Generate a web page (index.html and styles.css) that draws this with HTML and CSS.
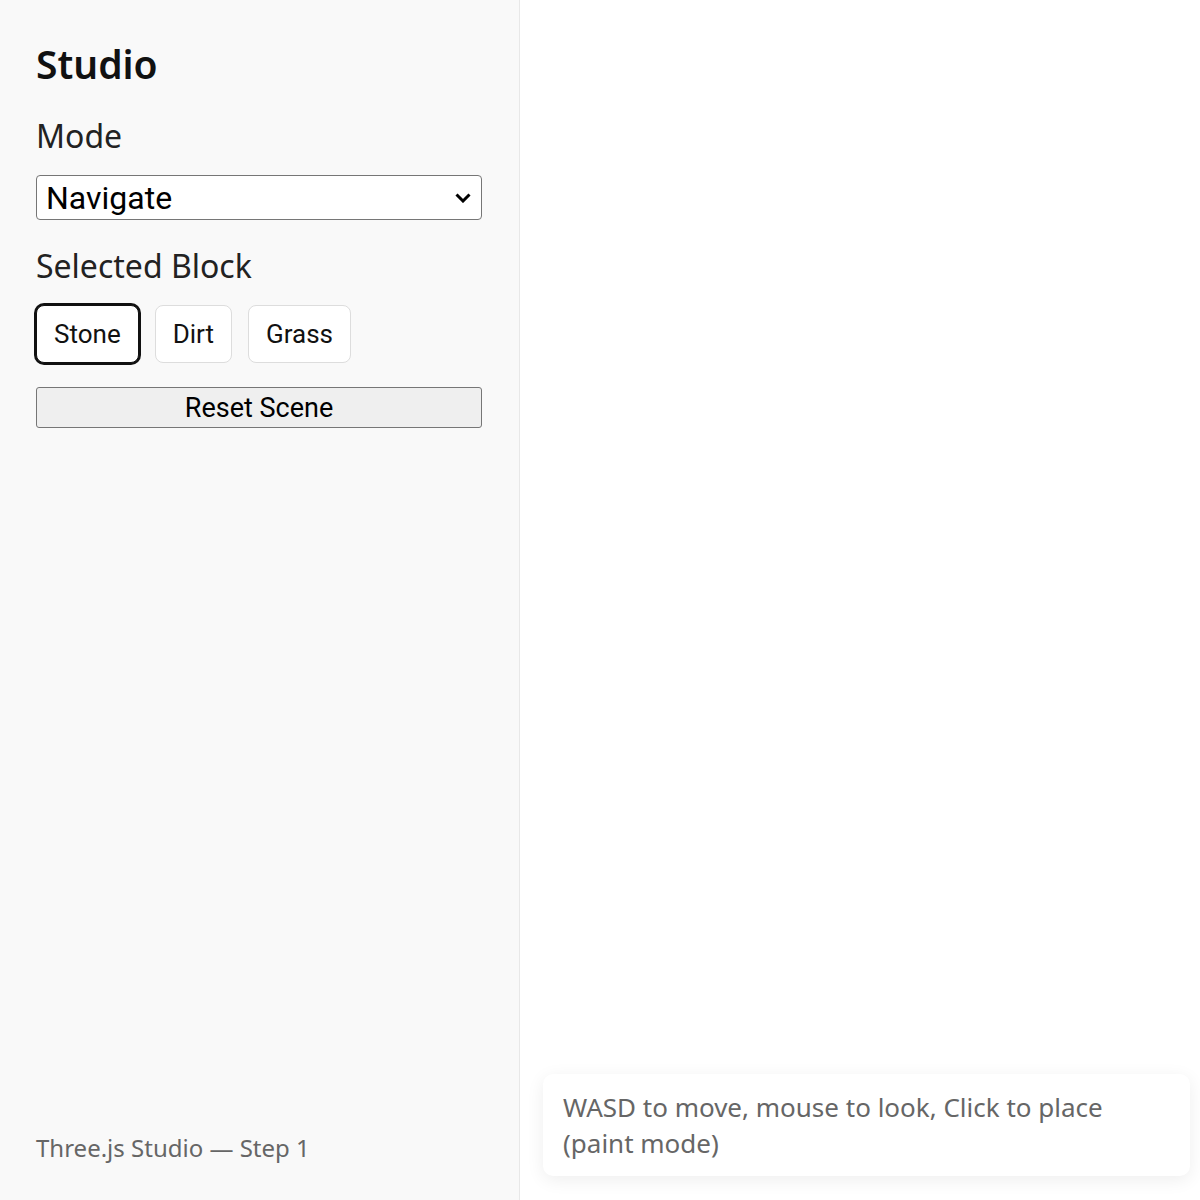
FILE: index.html
```html
<!DOCTYPE html>
<html lang="en">
<head>
    <meta charset="UTF-8">
    <meta name="viewport" content="width=device-width, initial-scale=1.0">
    <title>Three.js Studio</title>
    <link rel="stylesheet" href="styles.css">
</head>
<body>
    <aside class="sidebar">
        <h1>Studio</h1>

        <label class="field-label" for="mode">Mode</label>
        <select id="mode" class="mode-select">
            <option>Navigate</option>
            <option>Paint</option>
        </select>

        <div class="field-label block-label">Selected Block</div>
        <div class="block-list">
            <button class="block-btn selected">Stone</button>
            <button class="block-btn">Dirt</button>
            <button class="block-btn">Grass</button>
        </div>

        <button class="reset-btn">Reset Scene</button>

        <div class="footer">Three.js Studio — Step 1</div>
    </aside>

    <main class="viewport">
        <div class="hint">WASD to move, mouse to look, Click to place (paint mode)</div>
    </main>
</body>
</html>
```

FILE: styles.css
```css
html, body {
    margin: 0;
    height: 100%;
}
body {
    display: flex;
    font-family: "Noto Sans", sans-serif;
    color: #222;
    background: #fff;
}
.sidebar {
    box-sizing: border-box;
    width: 520px;
    height: 100%;
    padding: 36px;
    background: #f9f9f9;
    border-right: 1px solid #e8e8e8;
    display: flex;
    flex-direction: column;
    align-items: flex-start;
}
h1 {
    margin: 0 0 24px;
    font-size: 39px;
    line-height: 56px;
    font-weight: 600;
    color: #111;
}
.field-label {
    font-size: 32px;
    line-height: 40px;
    margin-bottom: 19px;
}
.mode-select {
    appearance: none;
    box-sizing: border-box;
    width: 446px;
    height: 45px;
    margin: 0 0 26px;
    padding: 0 40px 0 9px;
    font-family: Roboto, sans-serif;
    font-size: 32px;
    color: #000;
    background: #fff url("data:image/svg+xml,%3Csvg xmlns='http://www.w3.org/2000/svg' width='16' height='10' viewBox='0 0 16 10'%3E%3Cpath d='M1.5 1.5 8 8l6.5-6.5' fill='none' stroke='%23000' stroke-width='3'/%3E%3C/svg%3E") no-repeat right 10px center;
    border: 1px solid #767676;
    border-radius: 4px;
}
.block-list {
    display: flex;
    gap: 16px;
    margin-bottom: 24px;
}
.block-btn {
    font-family: Roboto, sans-serif;
    font-size: 26px;
    line-height: 30px;
    padding: 13px 17px;
    color: #111;
    background: #fff;
    border: 1px solid #ddd;
    border-radius: 8px;
    cursor: pointer;
}
.block-btn.selected {
    border-color: #111;
    box-shadow: 0 0 0 2px #111;
}
.reset-btn {
    box-sizing: border-box;
    width: 446px;
    height: 41px;
    padding: 0;
    font-family: Roboto, sans-serif;
    font-size: 27px;
    color: #000;
    background: #efefef;
    border: 1px solid #767676;
    border-radius: 3px;
    cursor: pointer;
}
.footer {
    margin-top: auto;
    font-size: 24px;
    line-height: 32px;
    color: #666;
}
.viewport {
    flex: 1;
    position: relative;
    background: #fff;
}
.hint {
    position: absolute;
    left: 23px;
    right: 10px;
    bottom: 24px;
    padding: 15px 20px;
    font-size: 26px;
    line-height: 36px;
    color: #666;
    background: #fff;
    border-radius: 10px;
    box-shadow: 0 4px 18px rgba(0, 0, 0, 0.07);
}
```
